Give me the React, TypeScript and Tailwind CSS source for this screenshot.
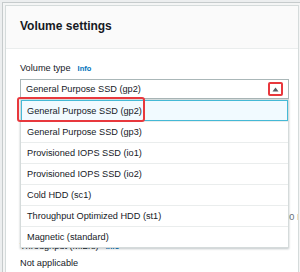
const volumeTypes = [
  "General Purpose SSD (gp2)",
  "General Purpose SSD (gp3)",
  "Provisioned IOPS SSD (io1)",
  "Provisioned IOPS SSD (io2)",
  "Cold HDD (sc1)",
  "Throughput Optimized HDD (st1)",
  "Magnetic (standard)",
];

const font = { fontFamily: '"Liberation Sans", Arial, sans-serif' };

const App = () => {
  return (
    <div
      className="w-[300px] h-[272px] overflow-hidden bg-[#eceeef] pl-[2px] pt-[2px]"
      style={font}
    >
      <div className="h-full border-l border-t border-[#c6cbcc] bg-[#f4f5f5] pl-[2px] pt-[2px]">
        <div className="h-[300px] w-[294px] overflow-hidden border border-[#d5dbdb] bg-white">
          {/* header */}
          <div className="flex h-[43px] items-center border-b border-[#eaeded] bg-[#fafafa] px-[14px] pb-[3px]">
            <h2 className="text-[12px] font-bold text-[#16191f]">Volume settings</h2>
          </div>

          {/* body */}
          <div className="pl-[14px] pr-[9px] pt-[13px] text-[9.2px] leading-[12px] text-[#16191f]">
            <div className="flex items-baseline gap-[7px]">
              <span>Volume type</span>
              <span className="text-[7.5px] font-bold text-[#0073bb]">Info</span>
            </div>

            <div className="relative mt-[4px] h-[20px] border border-[#aab7b8] bg-white">
              <div className="flex h-full items-center pl-[5px]">General Purpose SSD (gp2)</div>

              {/* caret with highlight */}
              <div className="absolute left-[247px] top-[2px] flex h-[14px] w-[15px] items-center justify-center rounded-[2px] border-2 border-[#e8383d]">
                <svg width="7" height="5" viewBox="0 0 7 5">
                  <path d="M3.5 0.5 L6.5 4.5 L0.5 4.5 Z" fill="#545b64" />
                </svg>
              </div>

              {/* options list */}
              <div className="absolute left-[-1px] right-[-1px] top-[19px] z-10 border border-[#d5dbdb] bg-white shadow-[0_1px_2px_rgba(0,28,36,0.25)]">
                {volumeTypes.map((t, i) => (
                  <div
                    key={t}
                    className={
                      i === 0
                        ? "flex h-[21px] items-center border border-[#44b9d6] bg-[#f1faff] pl-[5px]"
                        : "flex h-[21px] items-center border-t border-[#eaeded] pl-[6px]"
                    }
                  >
                    {t}
                  </div>
                ))}
              </div>

              {/* highlight around selected option */}
              <div className="absolute left-[-4px] top-[17px] z-20 h-[25px] w-[128px] rounded-[3px] border-2 border-[#e8383d]" />
            </div>

            {/* fields behind the list */}
            <div className="mt-[14px]">IOPS</div>
            <div className="mt-[4px] flex h-[20px] items-center border border-[#aab7b8] pl-[5px]">3000</div>
            <div className="mt-[6px] text-[#687078]">Baseline of 3 IOPS per GiB</div>
            <div className="mt-[44px] whitespace-nowrap pl-[254px] text-[#687078]">3000 IOPS</div>

            <div className="mt-[17px] flex items-baseline gap-[7px]">
              <span>Throughput (MiB/s)</span>
              <span className="text-[7.5px] font-bold text-[#0073bb]">Info</span>
            </div>
            <div className="mt-[4px]">Not applicable</div>
          </div>
        </div>
      </div>
    </div>
  );
};

export default App;
